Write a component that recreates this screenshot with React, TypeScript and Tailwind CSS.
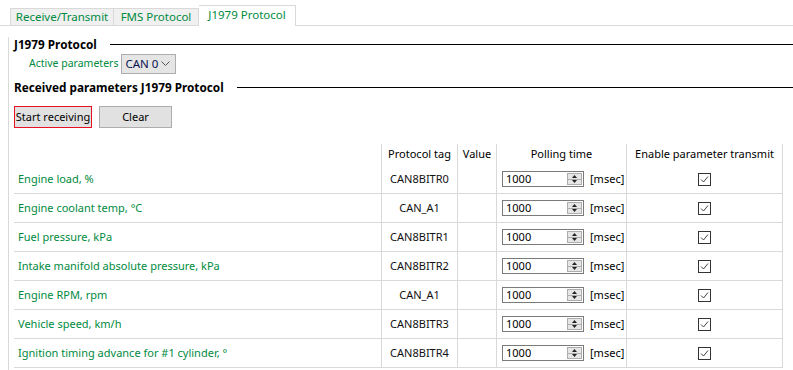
import React from 'react';

const green = 'text-[#008a3e]';

const rows = [
  { name: 'Engine load, %', tag: 'CAN8BITR0' },
  { name: 'Engine coolant temp, °C', tag: 'CAN_A1' },
  { name: 'Fuel pressure, kPa', tag: 'CAN8BITR1' },
  { name: 'Intake manifold absolute pressure, kPa', tag: 'CAN8BITR2' },
  { name: 'Engine RPM, rpm', tag: 'CAN_A1' },
  { name: 'Vehicle speed, km/h', tag: 'CAN8BITR3' },
  { name: 'Ignition timing advance for #1 cylinder, °', tag: 'CAN8BITR4' },
];

const SectionHeading = ({ title, className }: { title: string; className?: string }) => (
  <div className={`flex items-center h-[15px] ${className ?? ''}`}>
    <span className="font-bold text-[11.75px] text-black whitespace-nowrap">{title}</span>
    <div className="flex-1 h-px bg-black ml-[13px] -mt-px" />
  </div>
);

const SpinBox = () => (
  <div className="flex items-center gap-[6px]">
    <div className="flex w-[82px] h-[16px] border border-[#7a7a7a] bg-white">
      <span className="flex-1 pl-[3px] leading-[14px] text-black">1000</span>
      <div className="flex flex-col w-[15px] my-px mr-px border border-[#adadad] bg-[#e6e6e6]">
        <div className="flex-1 flex items-center justify-center border-b border-[#adadad]">
          <svg width="5" height="3" viewBox="0 0 5 3">
            <polygon points="2.5,0 5,3 0,3" fill="#222" />
          </svg>
        </div>
        <div className="flex-1 flex items-center justify-center">
          <svg width="5" height="3" viewBox="0 0 5 3">
            <polygon points="0,0 5,0 2.5,3" fill="#222" />
          </svg>
        </div>
      </div>
    </div>
    <span className="text-black">[msec]</span>
  </div>
);

const CheckBox = () => (
  <div className="w-[13px] h-[13px] border border-[#333] bg-white flex items-center justify-center">
    <svg width="11" height="11" viewBox="0 0 11 11">
      <polyline points="2,5.5 4.5,8 9,2.5" fill="none" stroke="#444" strokeWidth="1" />
    </svg>
  </div>
);

const App = () => {
  return (
    <div className="w-[793px] h-[370px] overflow-hidden bg-white font-['Noto_Sans',sans-serif] text-[11px]">
      {/* tabs */}
      <div className="flex items-end h-[26px] pl-[10px] border-b border-[#d9d9d9]">
        <div className={`h-[17px] w-[104px] flex items-center justify-center border border-b-0 border-[#d9d9d9] bg-[#f0f0f0] text-[11.5px] ${green}`}>
          Receive/Transmit
        </div>
        <div className={`h-[17px] w-[85px] flex items-center justify-center border border-l-0 border-b-0 border-[#d9d9d9] bg-[#f0f0f0] text-[11.5px] ${green}`}>
          FMS Protocol
        </div>
        <div className={`h-[21px] w-[97px] -mb-px pb-[3px] flex items-center justify-center border border-l-0 border-b-0 border-[#d9d9d9] bg-white text-[11.5px] ${green}`}>
          J1979 Protocol
        </div>
      </div>

      {/* page */}
      <div className="ml-[8px] h-[344px] border-l border-[#d9d9d9] pl-[5px]">
        <SectionHeading title="J1979 Protocol" className="mt-[11px]" />

        <div className="flex items-center mt-[2px] pl-[15px] h-[20px]">
          <span className={`text-[10.5px] ${green}`}>Active parameters</span>
          <div className="ml-[3px] flex items-center w-[55px] h-[20px] border border-[#adadad] bg-[#e5e5e5] pl-[3px] pr-[5px]">
            <span className="flex-1 text-[11.5px] text-[#0a1250]">CAN 0</span>
            <svg width="9" height="6" viewBox="0 0 9 6">
              <polyline points="0.5,0.5 4.5,4.5 8.5,0.5" fill="none" stroke="#555" strokeWidth="1" />
            </svg>
          </div>
        </div>

        <SectionHeading title="Received parameters J1979 Protocol" className="mt-[6px]" />

        <div className="flex gap-[7px] mt-[11px]">
          <button className="w-[78px] h-[22px] border border-[#e81123] bg-[#e1e1e1] text-black">
            Start receiving
          </button>
          <button className="w-[73px] h-[22px] border border-[#adadad] bg-[#e1e1e1] text-black">
            Clear
          </button>
        </div>

        {/* table */}
        <div className="mt-[16px] grid grid-cols-[367px_76px_39px_130px_157px] w-[769px]">
          <div className="h-[21px]" />
          <div className="h-[21px] border-l border-[#d9d9d9] flex items-center justify-center text-black">Protocol tag</div>
          <div className="h-[21px] border-l border-[#d9d9d9] flex items-center justify-center text-black">Value</div>
          <div className="h-[21px] border-l border-[#d9d9d9] flex items-center justify-center text-black">Polling time</div>
          <div className="h-[21px] border-x border-[#d9d9d9] flex items-center justify-center text-black">Enable parameter transmit</div>

          {rows.map((r, i) => (
            <React.Fragment key={i}>
              <div className={`h-[29px] border-b border-[#d9d9d9] flex items-center pl-[4px] ${green}`}>{r.name}</div>
              <div className="h-[29px] border-b border-l border-[#d9d9d9] flex items-center justify-center text-[#111]">{r.tag}</div>
              <div className="h-[29px] border-b border-l border-[#d9d9d9]" />
              <div className="h-[29px] border-b border-l border-[#d9d9d9] flex items-center pl-[5px]">
                <SpinBox />
              </div>
              <div className="h-[29px] border-b border-x border-[#d9d9d9] flex items-center justify-center">
                <CheckBox />
              </div>
            </React.Fragment>
          ))}
        </div>
      </div>
    </div>
  );
};

export default App;
